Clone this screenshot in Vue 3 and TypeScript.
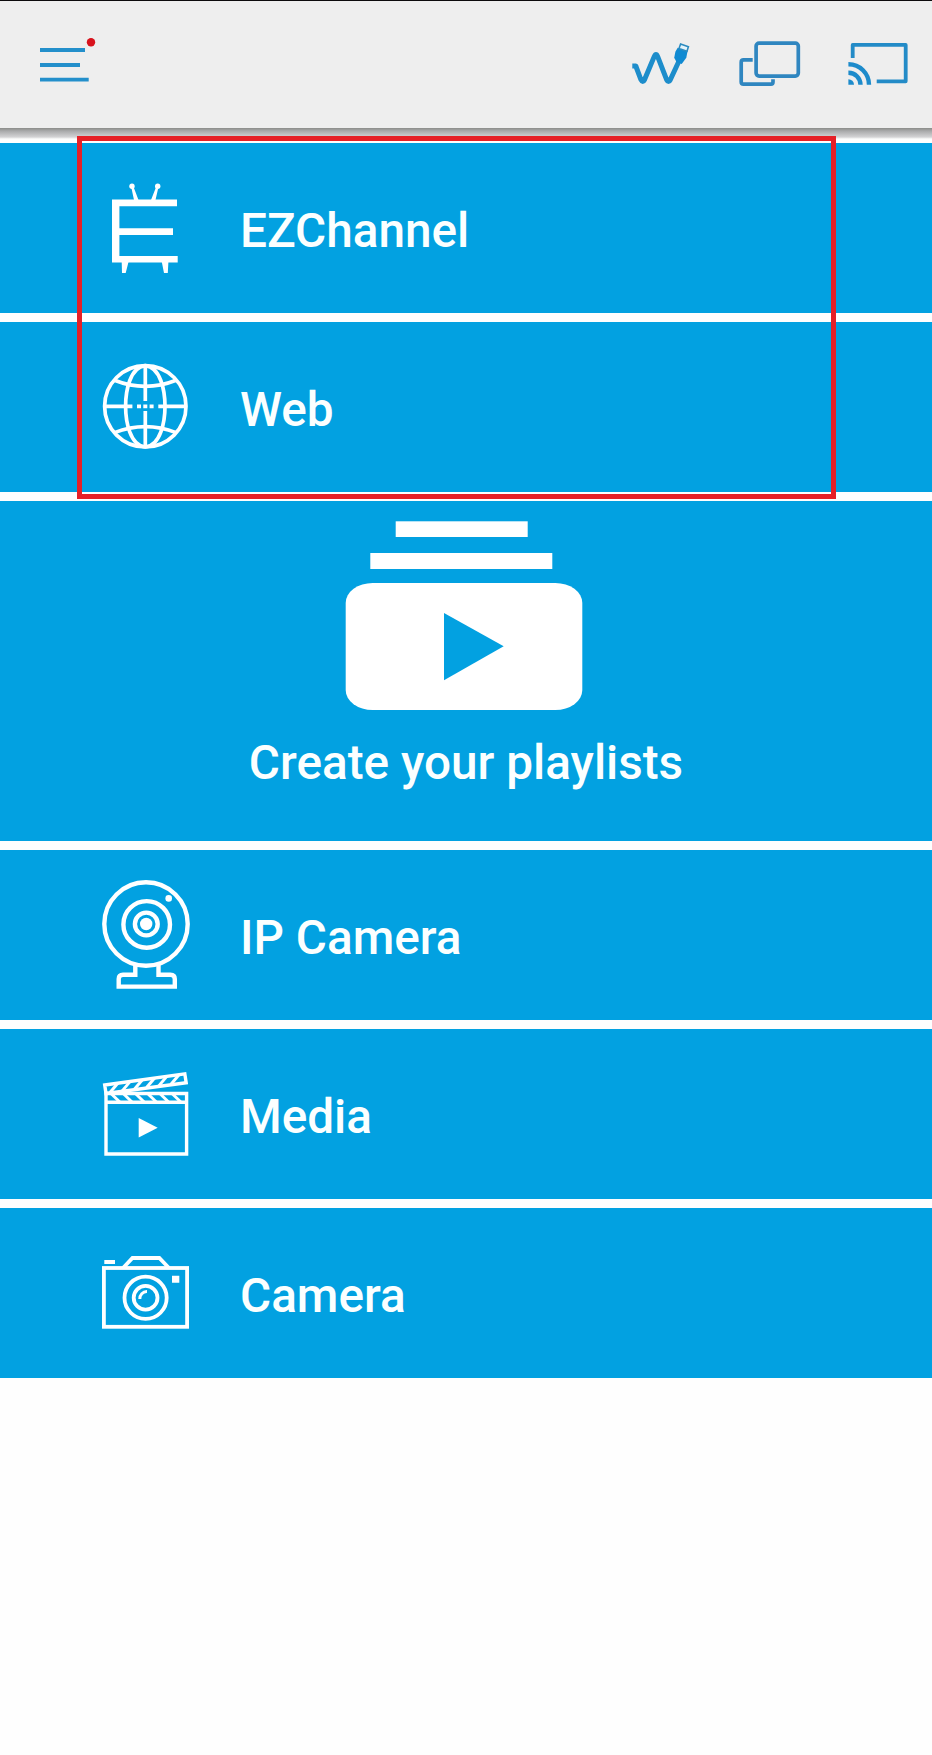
<script setup lang="ts">
type Source = { id: string; label: string }

const highlighted: Source[] = [
  { id: 'channel', label: 'EZChannel' },
  { id: 'web', label: 'Web' },
]

const devices: Source[] = [
  { id: 'ipcam', label: 'IP Camera' },
  { id: 'media', label: 'Media' },
  { id: 'camera', label: 'Camera' },
]

const stripes = [0, 1, 2, 3, 4, 5]
</script>

<template>
  <div class="screen">
    <header class="bar">
      <svg class="menu" width="60" height="50" viewBox="0 0 60 50">
        <path d="M0 12H45M0 27H40M0 41.7H48.7" fill="none" stroke="#238fcb" stroke-width="3.8" />
        <circle cx="51" cy="4.2" r="4.2" fill="#d8121c" />
      </svg>
      <div class="actions">
        <svg width="64" height="50" viewBox="0 0 64 50">
          <path d="M2.3 28H5.8L11 41.8Q12.7 45.4 14.5 41.8L24.3 18.4Q26 14.6 27.6 18.4L36.7 41.8Q38.5 45.4 40.3 41.8L49.5 22" fill="none" stroke="#1d8dcb" stroke-width="5" stroke-linejoin="round" />
          <path d="M47.7 9.7L57.6 13L56.3 19.7L51.7 26L46.5 24L44.2 19.7L45.4 13.7Z" fill="#0f8ad2" />
          <path d="M50.6 6L58.4 8.8L57 13.2L49 10.4Z" fill="#e4f4fb" stroke="#2c8bc0" stroke-width="1.6" />
        </svg>
        <svg width="64" height="50" viewBox="0 0 64 50">
          <g fill="none" stroke="#2f86c0" stroke-width="3.7">
            <rect x="18.1" y="5.1" width="42.2" height="33" rx="3" />
            <path d="M14.7 21.8H5.5Q3.2 21.8 3.2 24.2V44Q3.2 46.2 5.5 46.2H33Q35 46.2 35 44V41.2" />
          </g>
        </svg>
        <svg width="64" height="50" viewBox="0 0 64 50">
          <path d="M6.7 20V6.9H59.7V43.3H30.7" fill="none" stroke="#238bc7" stroke-width="3.8" stroke-linejoin="round" />
          <g fill="none" stroke="#1d8bcb" stroke-width="4.4">
            <path d="M2.4 26.2A20.5 20.5 0 0 1 23 46.8" />
            <path d="M2.4 34.8A12 12 0 0 1 14.5 46.8" />
          </g>
          <path d="M2.4 41.2A5.6 5.6 0 0 1 8 46.8H2.4Z" fill="#1d8bcb" />
        </svg>
      </div>
    </header>
    <div class="shade"></div>

    <main class="list">
      <section class="group">
        <div v-for="item in highlighted" :key="item.id" class="row">
          <svg v-if="item.id === 'channel'" class="icon" width="100" height="120" viewBox="0 0 100 120" fill="#fff">
            <path d="M17 31.6H82V38.3H24.4V60.3H78V67H24.4V88H82.7V94.5H17Z" />
            <circle cx="37" cy="18.2" r="2.7" />
            <circle cx="62.7" cy="18.2" r="2.7" />
            <path d="M36 18H38.2L43.5 32H39ZM61.5 18H63.7L60.5 32H56Z" />
            <path d="M26.7 94H33.5L30.7 105H27ZM66.8 94H73.4L72.8 105H69Z" />
          </svg>
          <svg v-else class="icon" width="100" height="120" viewBox="0 0 100 120" fill="none" stroke="#fff" stroke-width="3.7">
            <circle cx="50.3" cy="59.3" r="40.7" />
            <path d="M50.3 18.6C35 20 30.6 44 30.6 59.3S35 98.6 50.3 100C65.6 98.6 70 74.6 70 59.3S65.6 20 50.3 18.6Z" />
            <path d="M19.5 33.2Q50.3 45.4 81.1 33.2M19.5 85.6Q50.3 73.6 81.1 85.6" />
            <path d="M50.3 19V54M50.3 64V100M9.6 59.3H37.4M63.3 59.3H91" />
            <path d="M42 59.3H46M48.3 59.3H52.3M54.6 59.3H58.6" />
          </svg>
          <span class="label">{{ item.label }}</span>
        </div>
        <div class="frame"></div>
      </section>

      <div class="row tall">
        <svg width="242" height="190" viewBox="0 0 242 190" fill="#fff">
          <rect x="50.7" y="1.3" width="132" height="15.7" />
          <rect x="25.3" y="33" width="182" height="16" />
          <rect x="0.7" y="63" width="236.6" height="127" rx="27" ry="20" />
          <path d="M99 93L158.7 126.3L99 160.3Z" fill="#02a1e1" />
        </svg>
        <span class="label">Create your playlists</span>
      </div>

      <div v-for="item in devices" :key="item.id" class="row">
        <svg v-if="item.id === 'ipcam'" class="icon" width="100" height="120" viewBox="0 0 100 120" fill="none" stroke="#fff" stroke-width="4.4">
          <circle cx="51" cy="49" r="41.7" />
          <circle cx="51.7" cy="49.4" r="23.3" />
          <circle cx="51.3" cy="49" r="11.4" />
          <circle cx="51.2" cy="49" r="6.2" fill="#fff" stroke="none" />
          <circle cx="73.7" cy="23.4" r="3.3" fill="#fff" stroke="none" />
          <path d="M40.3 90V99.7H28Q23.7 99.7 23.7 104V111.6H79.8V104Q79.8 99.7 75.5 99.7H63.5V90" />
        </svg>
        <svg v-else-if="item.id === 'media'" class="icon" width="100" height="120" viewBox="0 0 100 120" fill="none" stroke="#fff" stroke-width="3.4">
          <path d="M11 39.5H91.6V100H11ZM11 48.3H91.6" />
          <path d="M9.7 31L89.8 19.8L91.2 28.7L11 39.5Z" />
          <g stroke-width="3">
            <path v-for="n in stripes" :key="n" :d="`M${16 + n * 12.2} 39.5l9 8.8`" />
            <path v-for="n in stripes" :key="`t${n}`" :d="`M${15 + n * 12.2} ${38.5 - n * 1.65}l8 -9.5`" />
          </g>
          <path d="M43.7 64L62.7 73.7L43.7 83.4Z" fill="#fff" stroke="none" />
        </svg>
        <svg v-else class="icon" width="100" height="120" viewBox="0 0 100 120" fill="none" stroke="#fff" stroke-width="3.8">
          <rect x="8.9" y="35" width="83.2" height="58.8" />
          <path d="M28 35L37.5 25H64.3L74 35" />
          <circle cx="50.6" cy="64.8" r="21.1" />
          <circle cx="50.6" cy="64.8" r="11.9" />
          <path d="M44.8 66A7 7 0 0 1 52 58.6" stroke-width="3" />
          <path d="M9.3 27.1H20V31H9.3ZM77 42.8H84.3V49.8H77Z" fill="#fff" stroke="none" />
        </svg>
        <span class="label">{{ item.label }}</span>
      </div>
    </main>
  </div>
</template>

<style>
body {
  margin: 0;
  background: #fefefe;
}
</style>

<style scoped>
.screen {
  width: 100%;
  min-height: 1755px;
  background: #fefefe;
  font-family: Roboto, "Liberation Sans", sans-serif;
}
.bar {
  box-sizing: border-box;
  display: flex;
  height: 128px;
  padding: 37px 22px 0 40px;
  border-top: 1px solid #0c0a0c;
  background: #eee;
}
.actions {
  display: flex;
  gap: 44px;
  margin-left: auto;
}
.shade {
  height: 15px;
  background: linear-gradient(#8b8c89 0, #a9aaab 3px, #d3d3d5 9px, #fdfefe 11px);
}
svg {
  display: block;
  flex: none;
}
.list,
.group {
  display: flex;
  flex-direction: column;
  gap: 9px;
}
.group {
  position: relative;
}
.row {
  box-sizing: border-box;
  display: flex;
  align-items: center;
  height: 170px;
  padding-left: 95px;
  background: #02a1e1;
}
.icon {
  margin-right: 45px;
}
.label {
  margin-top: 6px;
  color: #fbffff;
  font-size: 47.7px;
  font-weight: 500;
  line-height: 56px;
  white-space: nowrap;
}
.tall {
  flex-direction: column;
  height: 340px;
  padding: 19px 0 0;
}
.tall .label {
  margin-top: 25px;
}
.frame {
  position: absolute;
  top: -7px;
  left: 77px;
  box-sizing: border-box;
  width: 759px;
  height: 363px;
  border: 5px solid #e62027;
}
</style>
